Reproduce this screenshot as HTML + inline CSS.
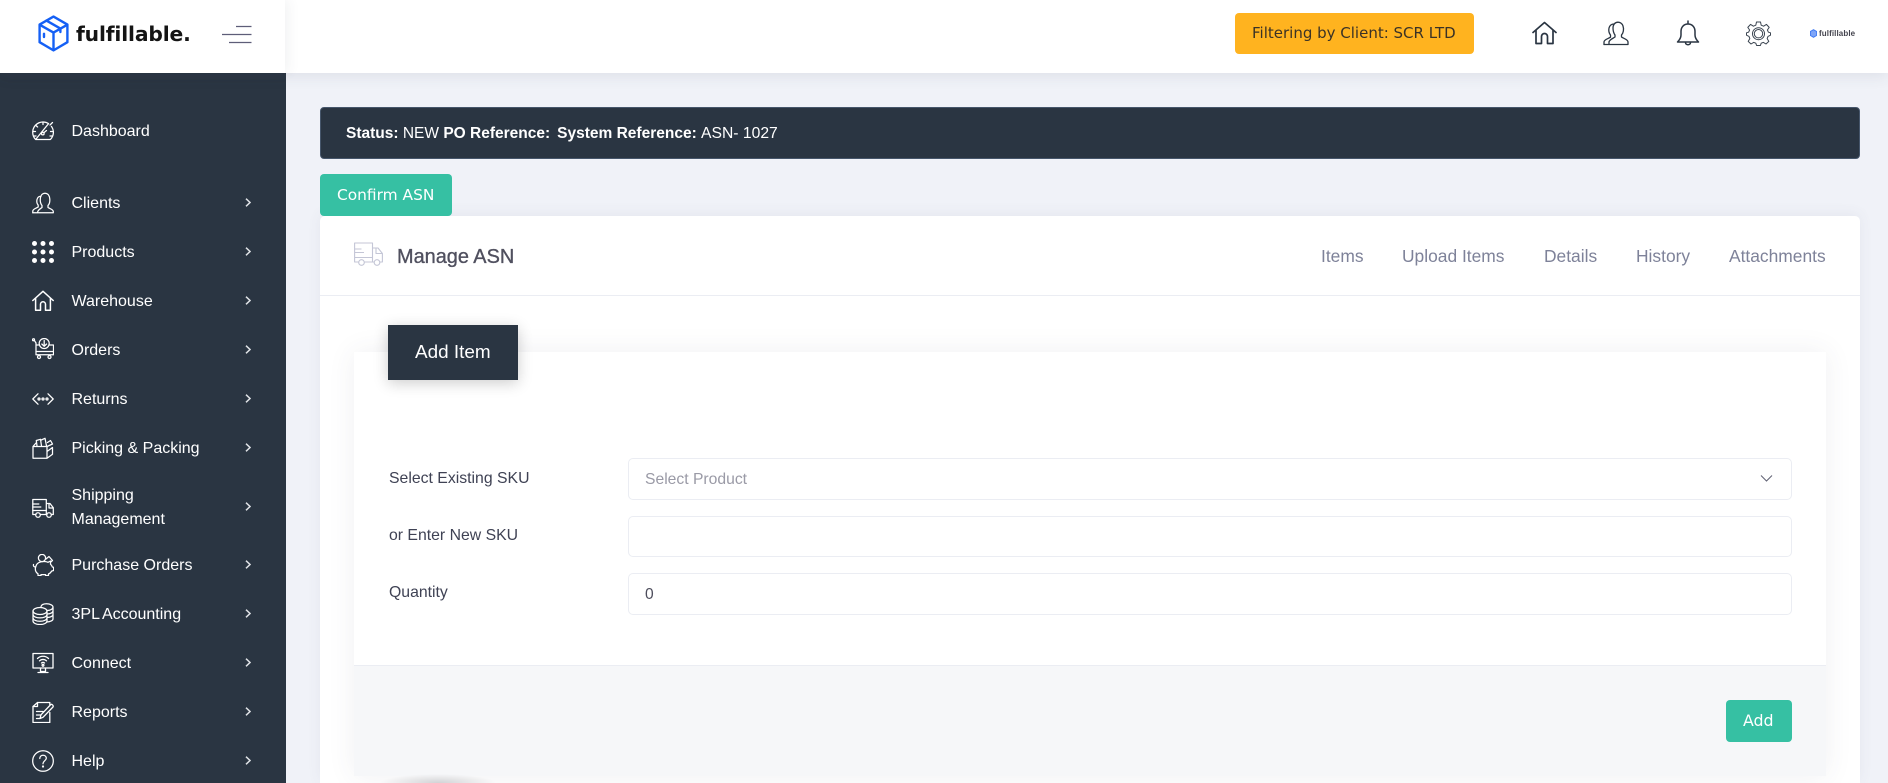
<!DOCTYPE html>
<html lang="en">
<head>
<meta charset="utf-8">
<title>Manage ASN</title>
<style>
html,body{margin:0;padding:0;width:1888px;height:783px;overflow:hidden;background:#f0f2f8;font-family:"Liberation Sans",Arial,sans-serif}
*{box-sizing:border-box}
#w{position:relative;width:1888px;height:783px;overflow:hidden;background:#f0f2f8}
.a{position:absolute}
.t{position:absolute;white-space:nowrap}
.p{font-family:"DejaVu Sans",sans-serif}
.nav{position:absolute;left:71.5px;color:#fff;font-size:16px;line-height:24px;height:24px;white-space:nowrap}
.ic{position:absolute;left:32px;width:22px;height:22px;fill:none;stroke:#fff;stroke-width:1.25;stroke-linecap:round;stroke-linejoin:round}
.ch{position:absolute;left:244.5px;width:6px;height:9px;fill:none;stroke:#dfe2e6;stroke-width:1.5}
.tab{position:absolute;top:244px;line-height:24px;font-size:17.4px;color:#7e8299;white-space:nowrap}
.lbl{position:absolute;left:389px;font-size:15.8px;line-height:22px;color:#3f4254;white-space:nowrap}
.fld{position:absolute;left:628px;width:1164px;background:#fff;border:1px solid #ebedf3;border-radius:5px}
</style>
</head>
<body>
<div id="w">
<!-- top header -->
<div class="a" style="left:0;top:0;width:1888px;height:73px;background:#fff;box-shadow:0 3px 14px rgba(60,65,90,.10);z-index:3"></div>
<div class="a" style="left:0;top:0;width:285px;height:73px;background:#fff;box-shadow:3px 0 12px rgba(60,65,90,.07);z-index:4"></div>

<div style="position:absolute;left:0;top:0;width:1888px;height:73px;z-index:5">
  <!-- logo -->
  <svg class="a" style="left:38px;top:15px" width="31" height="37" viewBox="0 0 31 37" fill="none" stroke="#1560f5" stroke-width="2.4" stroke-linejoin="round" stroke-linecap="round">
    <path d="M15.5 1.6 29.4 9.6V27.2L15.5 35.4 1.6 27.2V9.6Z"/>
    <path d="M1.8 9.8 15.5 17.6 29.2 9.8M15.5 17.6V35M8.4 5.6 22.4 13.6V17"/>
    <path d="M6 18.8V22"/>
  </svg>
  <div class="t p" style="left:76px;top:19px;font-weight:bold;font-size:20.3px;line-height:30px;color:#141414;letter-spacing:-.15px">fulfillable.</div>
  <!-- hamburger -->
  <svg class="a" style="left:222px;top:24px" width="30" height="21" viewBox="0 0 30 21" stroke="#5d5d78" stroke-width="1.2"><path d="M14 2.5H29.5M0 10.5H29.5M7 18.5H29.5"/></svg>

  <div class="a" style="left:1235px;top:13px;width:239px;height:41px;background:#ffb31f;border-radius:4px"></div>
  <div class="t p" style="left:1252px;top:22px;font-size:15px;line-height:23px;color:#3a3226">Filtering by Client: SCR LTD</div>

  <svg class="a" style="left:1532px;top:21px" width="25" height="24" viewBox="0 0 25 24" fill="none" stroke="#2a3542" stroke-width="1.7" stroke-linejoin="round" stroke-linecap="round">
    <path d="M1 11.5 12.5 1.5 24 11.5"/><path d="M4 9.5V22.5H9.5V15.5A3 3 0 0 1 15.5 15.5V22.5H21V9.5"/>
  </svg>
  <svg class="a" style="left:1603px;top:21px" width="26" height="25" viewBox="0 0 26 25" fill="none" stroke="#2a3542" stroke-width="1.3" stroke-linejoin="round" stroke-linecap="round">
    <path d="M1 23.5V21C1 18.5 5.5 17.5 7.5 16.2V14C5.8 12 5.5 9.5 6 7 7 3.5 9.5 3 11 3"/>
    <path d="M1 23.5H25V21C25 18.5 20.5 17.5 18.5 16V14C20.5 12 21 8 20 5 19 2 16.5 1.2 15 1.2 12 1.2 10 3.5 10 7 10 9.5 10.5 12 12 14V16C10 17.5 6.500 18.500 6 21V23.500"/>
  </svg>
  <svg class="a" style="left:1676px;top:20px" width="24" height="27" viewBox="0 0 24 27" fill="none" stroke="#2a3542" stroke-width="1.5" stroke-linejoin="round" stroke-linecap="round">
    <path d="M12 1V4M12 4C7.5 4 5 7.5 5 11.5V15C5 18 3.5 20 1.5 22H22.5C20.5 20 19 18 19 15V11.5C19 7.5 16.5 4 12 4Z"/><path d="M9.5 22.5C9.5 25.5 14.5 25.5 14.5 22.5"/>
  </svg>
  <svg class="a" style="left:1746px;top:21px" width="25" height="25" viewBox="0 0 25 25" fill="none" stroke="#3a4450" stroke-width="1" stroke-linejoin="round">
    <path d="M10.5 1H14.5L15.2 4.2 17.6 5.2 20.4 3.4 23.2 6.4 21.4 9 22.4 11.2 24.5 11.8V14.2L22 15.4 21.2 17.6 22.8 20.4 20 23 17.4 21.4 15.2 22.2 14.4 24.5H10.6L9.8 22.2 7.6 21.4 5 23 2.2 20.4 3.8 17.6 3 15.4 .5 14.2V11.8L2.6 11.2 3.6 9 1.8 6.4 4.6 3.4 7.4 5.2 9.8 4.2Z"/>
    <circle cx="12.5" cy="12.7" r="6"/><circle cx="12.5" cy="12.7" r="4.2"/>
  </svg>
  <svg class="a" style="left:1810px;top:29px" width="7" height="9" viewBox="0 0 31 37" fill="#7fa5f7" stroke="#3d78f2" stroke-width="4"><path d="M15.5 1.6 29.4 9.6V27.2L15.5 35.4 1.6 27.2V9.6Z"/></svg>
  <div class="t" style="left:1819px;top:28px;font:bold 8px/11px 'Liberation Sans',sans-serif;color:#44444e;letter-spacing:.1px">fulfillable</div>
</div>

<!-- sidebar -->
<div class="a" style="left:0;top:73px;width:286px;height:710px;background:#2a3542;z-index:2"></div>
<div style="position:absolute;left:0;top:0;width:286px;height:783px;z-index:2">
  <span class="nav" style="top:120px">Dashboard</span>
  <span class="nav" style="top:192px">Clients</span>
  <span class="nav" style="top:241px">Products</span>
  <span class="nav" style="top:290px">Warehouse</span>
  <span class="nav" style="top:339px">Orders</span>
  <span class="nav" style="top:388px">Returns</span>
  <span class="nav" style="top:437px">Picking &amp; Packing</span>
  <span class="nav" style="top:484px">Shipping</span>
  <span class="nav" style="top:508px">Management</span>
  <span class="nav" style="top:554px">Purchase Orders</span>
  <span class="nav" style="top:603px;word-spacing:-1px">3PL Accounting</span>
  <span class="nav" style="top:652px">Connect</span>
  <span class="nav" style="top:701px">Reports</span>
  <span class="nav" style="top:750px">Help</span>

  <svg class="ch" style="top:198px" viewBox="0 0 6 9"><path d="M1 .7 5 4.500 1 8.300"/></svg>
  <svg class="ch" style="top:247px" viewBox="0 0 6 9"><path d="M1 .7 5 4.500 1 8.300"/></svg>
  <svg class="ch" style="top:296px" viewBox="0 0 6 9"><path d="M1 .7 5 4.500 1 8.300"/></svg>
  <svg class="ch" style="top:345px" viewBox="0 0 6 9"><path d="M1 .7 5 4.500 1 8.300"/></svg>
  <svg class="ch" style="top:394px" viewBox="0 0 6 9"><path d="M1 .7 5 4.500 1 8.300"/></svg>
  <svg class="ch" style="top:443px" viewBox="0 0 6 9"><path d="M1 .7 5 4.500 1 8.300"/></svg>
  <svg class="ch" style="top:502px" viewBox="0 0 6 9"><path d="M1 .7 5 4.500 1 8.300"/></svg>
  <svg class="ch" style="top:560px" viewBox="0 0 6 9"><path d="M1 .7 5 4.500 1 8.300"/></svg>
  <svg class="ch" style="top:609px" viewBox="0 0 6 9"><path d="M1 .7 5 4.500 1 8.300"/></svg>
  <svg class="ch" style="top:658px" viewBox="0 0 6 9"><path d="M1 .7 5 4.500 1 8.300"/></svg>
  <svg class="ch" style="top:707px" viewBox="0 0 6 9"><path d="M1 .7 5 4.500 1 8.300"/></svg>
  <svg class="ch" style="top:756px" viewBox="0 0 6 9"><path d="M1 .7 5 4.500 1 8.300"/></svg>

  <!-- dashboard -->
  <svg class="ic" style="top:120px" viewBox="0 0 22 22"><path d="M3.600 19.500H18.400C20.200 17.600 21.400 15 21.400 12.200 21.400 10 20.600 8 19.400 6.400M16.600 3.600C14.900 2.500 13 2 11 2 5.300 2 .7 6.600 .7 12.200 .7 15 1.800 17.600 3.600 19.500Z"/><path d="M11 2V4.500M4 5.500 5.600 7M1 11.500H3.500M2 16H4M18.500 11.500H21M18 16H20M18 5 20.500 2.500"/><circle cx="10.800" cy="13.600" r="1.300"/><path d="M12 12.600 14.500 10.500"/></svg>
  <!-- clients -->
  <svg class="ic" style="top:192px" viewBox="0 0 22 22"><path d="M.8 20.800V19C.8 17 4.500 16.200 6.200 15V13.200C4.800 11.500 4.500 9.500 5 7.500 5.700 5 7.600 4.300 9 4.300"/><path d="M.8 20.800H21.300V19.500C21.300 17.500 18 16.800 16 15.500V13.500C17.500 12 18 9.500 17.800 7 17.500 3.500 15.800 1.200 13 1.200 10.300 1.200 8.500 3.500 8.300 7 8.100 9.500 8.800 12 10 13.500V15.500C8.500 16.800 6 17.500 5.500 20.500"/></svg>
  <!-- products -->
  <svg style="position:absolute;left:32px;top:241px" width="22" height="22" viewBox="0 0 22 22" fill="#fff"><circle cx="2.500" cy="2.500" r="2.500"/><circle cx="11" cy="2.500" r="2.500"/><circle cx="19.500" cy="2.500" r="2.500"/><circle cx="2.500" cy="11" r="2.500"/><circle cx="11" cy="11" r="2.500"/><circle cx="19.500" cy="11" r="2.500"/><circle cx="2.500" cy="19.500" r="2.500"/><circle cx="11" cy="19.500" r="2.500"/><circle cx="19.500" cy="19.500" r="2.500"/></svg>
  <!-- warehouse -->
  <svg class="ic" style="top:290px;stroke-width:1.500" viewBox="0 0 22 22"><path d="M.8 10.500 11 1.300 21.200 10.500"/><path d="M3.600 8.200V20.300H8.500V14.300A2.500 2.500 0 0 1 13.500 14.300V20.300H18.400V8.200"/></svg>
  <!-- orders -->
  <svg class="ic" style="top:338px" viewBox="0 0 22 22"><circle cx="1.500" cy="1.800" r="1"/><path d="M2.300 2.300 4 5V16.800H21.500V7H17"/><path d="M6.500 7H4.500M4 13.500H21.500"/><circle cx="12.200" cy="5.500" r="5"/><path d="M12.200 2.500V8.300M9.800 6 12.200 8.300 14.600 6"/><circle cx="7" cy="19" r="1.500"/><circle cx="17.500" cy="19" r="1.500"/></svg>
  <!-- returns -->
  <svg class="ic" style="top:388px" viewBox="0 0 22 22"><path d="M6 5.800 .8 11 6 16.200M16 5.800 21.200 11 16 16.200"/><circle cx="7" cy="11" r="1"/><circle cx="11" cy="11" r="1"/><circle cx="15" cy="11" r="1"/></svg>
  <!-- picking -->
  <svg class="ic" style="top:437px" viewBox="0 0 22 22"><path d="M1 9.500H15V21.300H1ZM15 21.300 20.500 17.300V10.500L15 14.500M15 9.500 20.500 7 18.500 3.500 15.500 5.500M5 9 4.300 3.500 8.500 2.300 9.500 9M9.300 3 13 1.300 14.500 9M1 9.500 4 6"/></svg>
  <!-- shipping -->
  <svg class="ic" style="top:497px" viewBox="0 0 22 22"><path d="M4 17.500H.8V2.500H14.300V17.500H8.200M14.300 6.500H18L21.300 10.800V17.500H19.300M14.300 17.500H15M17 6.500V11H21.300"/><path d="M.8 7H6.800M.8 10H8.800M.8 13.500H14.300"/><circle cx="6" cy="18" r="2.300"/><circle cx="17" cy="18" r="2.300"/></svg>
  <!-- purchase -->
  <svg class="ic" style="top:554px" viewBox="0 0 22 22"><path d="M4 12C5 8.500 9 7.500 12 7.500 13.500 7.500 15 7.800 16 8.300L18.500 7V10.300C19.500 11 20 12 20.300 13L21.600 13.300V16.500L19.800 17C19 18.300 18 19.300 16.500 20V21.500H13.500V20.600H9V21.500H6V19.800C4 18.500 3 16 3.500 13.500Z"/><path d="M3.500 13C2 13 1 12 1.500 10.500"/><circle cx="10" cy="4" r="3.600"/><path d="M14 5 17 2.500 20.500 6.500 18.800 8"/></svg>
  <!-- 3pl -->
  <svg class="ic" style="top:603px" viewBox="0 0 22 22"><ellipse cx="8" cy="8" rx="7" ry="3.500"/><path d="M1 8V18C1 20 4 21.500 8 21.500 12 21.500 15 20 15 18V8M1 11.400C1 13.400 4 14.900 8 14.900S15 13.400 15 11.400M1 14.800C1 16.800 4 18.300 8 18.300S15 16.800 15 14.800"/><path d="M9 3.500C9.500 2 11.500 .8 14.500 .8 18.300 .8 21 2.300 21 4V16C21 17.500 18.500 18.800 15 19M15 7.500C18.500 7.500 21 6 21 4M15 11C18.500 11 21 9.600 21 7.800M15 14.500C18.500 14.500 21 13 21 11.500"/></svg>
  <!-- connect -->
  <svg class="ic" style="top:652px;stroke-width:1.300" viewBox="0 0 22 22"><path d="M1 1.500H21V16H1ZM8.500 16V19.500H13.500V16M6 20.500H16"/><path d="M5.500 6.500C8.500 3.500 13.500 3.500 16.500 6.500M7.500 8.800C9.500 7 12.500 7 14.500 8.800M9.500 11C10.500 10.300 11.500 10.300 12.500 11"/><circle cx="11" cy="13.300" r=".9"/></svg>
  <!-- reports -->
  <svg class="ic" style="top:701px;stroke-width:1.300" viewBox="0 0 22 22"><path d="M17.800 11.500V21.500H1V5.500L5.500 1.500H17.800V3.500"/><path d="M1 5.500H5.500V1.500M4.500 10.500H11M4.500 14H8.500M4.500 17.500H7.500"/><path d="M8 17.500 9 13.800 18.800 3.500C19.800 2.800 21.800 4.500 21 6L11 16.300Z"/></svg>
  <!-- help -->
  <svg class="ic" style="top:750px" viewBox="0 0 22 22"><circle cx="11" cy="11" r="10.300"/><path d="M7.800 8.500C7.800 6.500 9.300 5.200 11 5.200 12.900 5.200 14.300 6.500 14.300 8.200 14.300 10.500 11 11 11 13.800"/><circle cx="11" cy="16.500" r=".5"/></svg>
</div>

<!-- status bar -->
<div class="a" style="left:320px;top:107px;width:1540px;height:52px;background:#2a3542;border:1px solid #46566b;border-radius:4px"></div>
<div class="t" style="left:346px;top:122.5px;font-size:15.5px;line-height:22px;color:#fff"><b>Status:</b> NEW <b>PO Reference:</b><span style="display:inline-block;width:7px"></span><b>System Reference:</b> <span style="font-size:15.7px">ASN- 1027</span></div>

<!-- card -->
<div class="a" style="left:320px;top:216px;width:1540px;height:567px;background:#fff;border-radius:5px 5px 0 0;box-shadow:0 -2px 14px rgba(80,85,120,.07)"></div>
<div class="a" style="left:320px;top:174px;width:132px;height:42px;background:#36c0a3;border-radius:4px"></div>
<div class="t p" style="left:337px;top:184px;font-size:15.400px;line-height:22px;color:#fff">Confirm ASN</div>

<svg class="a" style="left:354px;top:242px" width="29" height="24" viewBox="0 0 29 24" fill="none" stroke="#c4c6d6" stroke-width="1.100" stroke-linejoin="round">
  <path d="M4.500 20H.6V1H18.500V20H10M18.500 6H24L28.400 11.500V20H25.500M18.500 20H20"/><path d="M22 6V11.500H28.400M.6 7H7.500M.6 10.500H10M.6 15.500H18.500"/><circle cx="7.500" cy="20.500" r="2.800"/><circle cx="23" cy="20.500" r="2.800"/>
</svg>
<div class="t" style="left:397px;top:244px;font-size:19.900px;line-height:26px;color:#50505f;-webkit-text-stroke:.35px #50505f">Manage ASN</div>

<span class="tab" style="left:1321px">Items</span>
<span class="tab" style="left:1402px">Upload Items</span>
<span class="tab" style="left:1544px">Details</span>
<span class="tab" style="left:1636px">History</span>
<span class="tab" style="left:1729px">Attachments</span>
<div class="a" style="left:320px;top:295px;width:1540px;height:1px;background:#ebedf3"></div>

<!-- inner card -->
<div class="a" style="left:354px;top:352px;width:1472px;height:424px;background:#fff;box-shadow:0 0 26px rgba(60,65,90,.08)"></div>
<div class="a" style="left:354px;top:665px;width:1472px;height:111px;background:#f6f7f9;border-top:1px solid #ebedf3"></div>
<div class="a" style="left:388px;top:325px;width:130px;height:55px;background:#2a3542;box-shadow:0 3px 14px rgba(0,0,0,.2)"></div>
<div class="t" style="left:415px;top:340px;font-size:18.900px;line-height:26px;color:#fff">Add Item</div>

<span class="lbl" style="top:468px">Select Existing SKU</span>
<span class="lbl" style="top:525px">or Enter New SKU</span>
<span class="lbl" style="top:582px">Quantity</span>

<div class="fld" style="top:458px;height:42px"></div>
<div class="t" style="left:645px;top:469px;font-size:15.700px;line-height:22px;color:#9a9aa6">Select Product</div>
<svg class="a" style="left:1760px;top:474px" width="13" height="9" viewBox="0 0 13 9" fill="none" stroke="#5f6072" stroke-width="1"><path d="M1 1.500 6.500 7 12 1.500"/></svg>
<div class="fld" style="top:516px;height:41px"></div>
<div class="fld" style="top:573px;height:42px"></div>
<div class="t" style="left:645px;top:584px;font-size:15.600px;line-height:22px;color:#4d4d5c">0</div>

<div class="a" style="left:1726px;top:700px;width:66px;height:42px;background:#36c0a3;border-radius:4px"></div>
<div class="t p" style="left:1743px;top:710px;font-size:15.800px;line-height:22px;color:#fff">Add</div>

<!-- shadow of next section title at the viewport edge -->
<div class="a" style="left:380px;top:773px;width:116px;height:10px;background:radial-gradient(ellipse 58px 9px at 50% 100%,rgba(50,52,62,.2),rgba(50,52,62,0))"></div>
</div>
</body>
</html>
